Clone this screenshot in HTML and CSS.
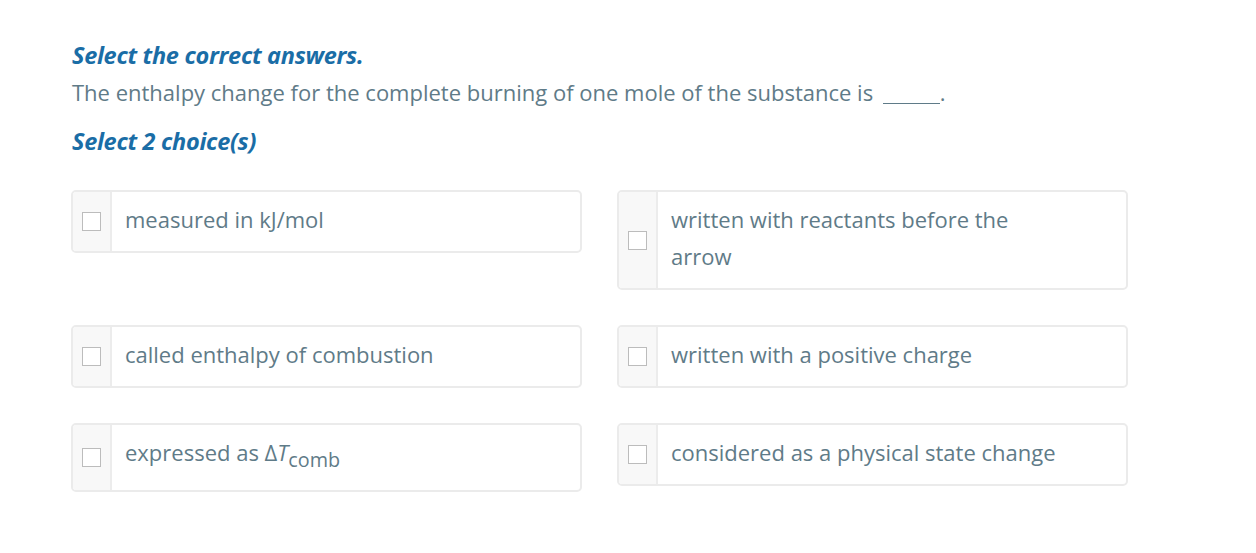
FILE: index.html
```html
<!DOCTYPE html>
<html>
<head>
<meta charset="utf-8">
<link rel="stylesheet" href="styles.css">
</head>
<body>
<div class="quiz">
  <h1 class="heading">Select the correct answers.</h1>
  <p class="prompt">The enthalpy change for the complete burning of one mole of the substance is <span class="blank"></span>.</p>
  <h2 class="heading sub">Select 2 choice(s)</h2>
  <div class="choices">
    <label class="choice"><span class="box-col"><span class="box"></span></span><span class="text">measured in kJ/mol</span></label>
    <label class="choice"><span class="box-col"><span class="box"></span></span><span class="text">written with reactants before the arrow</span></label>
    <label class="choice"><span class="box-col"><span class="box"></span></span><span class="text">called enthalpy of combustion</span></label>
    <label class="choice"><span class="box-col"><span class="box"></span></span><span class="text">written with a positive charge</span></label>
    <label class="choice"><span class="box-col"><span class="box"></span></span><span class="text">expressed as <span class="math">Δ<i>T</i><sub>comb</sub></span></span></label>
    <label class="choice"><span class="box-col"><span class="box"></span></span><span class="text">considered as a physical state change</span></label>
  </div>
</div>
</body>
</html>
```
FILE: styles.css
```css
html, body { margin: 0; padding: 0; background: #fff; }
body { font-family: "Open Sans", "Noto Sans", sans-serif; color: #5f7b88; }
.quiz { padding: 37px 0 0 72px; width: 1056px; }
.heading {
  margin: 0;
  font-size: 23.5px;
  font-weight: 700;
  font-style: italic;
  color: #1a6da6;
  line-height: 36px;
  letter-spacing: -0.3px;
}
.prompt { margin: 0; font-size: 22px; line-height: 38px; }
.blank { display: inline-block; width: 57px; border-bottom: 1.5px solid #5f7b88; margin-left: 4px; vertical-align: -3px; height: 16px; }
.sub { margin-top: 12px; }
.choices {
  margin-top: 31px;
  display: grid;
  grid-template-columns: 511px 511px;
  column-gap: 35px;
  row-gap: 35px;
  align-items: start;
  margin-left: -1px;
}
.choice {
  display: flex;
  border: 2px solid #ebebeb;
  border-radius: 5px;
  overflow: hidden;
  background: #fff;
}
.box-col {
  flex: 0 0 37px;
  background: #f8f8f8;
  border-right: 2px solid #ececec;
  display: flex;
  align-items: center;
  justify-content: center;
}
.box { width: 19px; height: 19px; border: 1.5px solid #bcbcbc; background: #fff; box-sizing: border-box; }
.text {
  padding: 9px 13px 13px;
  font-size: 22px;
  line-height: 37px;
  max-width: 395px;
}
.math i { font-style: italic; }
.math sub { font-size: 0.9em; line-height: 35px; vertical-align: -6px; }
```
